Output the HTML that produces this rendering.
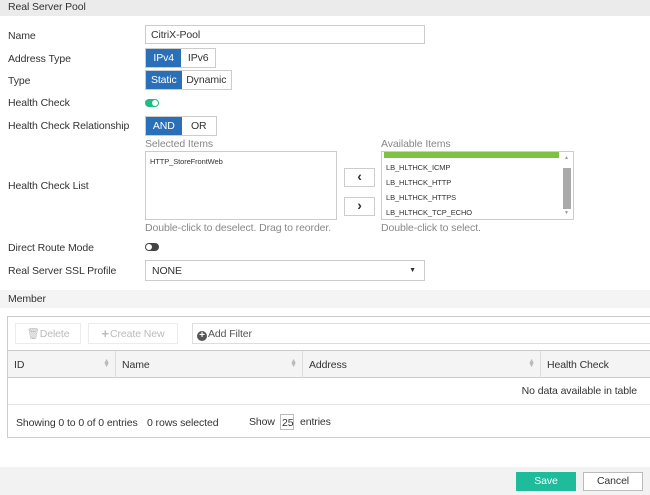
<!DOCTYPE html>
<html><head><style>
*{box-sizing:border-box;margin:0;padding:0}
body{width:650px;height:495px;background:#fff;font-family:"Liberation Sans",Arial,sans-serif;font-size:10.5px;color:#333;position:relative;overflow:hidden;letter-spacing:-0.1px}
.a{position:absolute}
.lbl{position:absolute;left:8px;font-size:10.5px;color:#333}
.bg{position:absolute;display:flex;border:1px solid #ccc;height:20px;background:#fff}
.bg div{display:flex;align-items:center;justify-content:center;font-size:10.5px;color:#333}
.bg .on{background:#2a70b8;color:#fff}
.box{position:absolute;border:1px solid #ccc;background:#fff}
.tog{position:absolute;width:14px;height:8px;border-radius:4px}
.tog i{position:absolute;top:1px;width:6px;height:6px;border-radius:3px;background:#fff}
.hint{position:absolute;color:#888;font-size:10.5px}
.it{position:absolute;left:4px;font-size:7.5px;color:#333}
.tb{position:absolute;border:1px solid #ececec;height:21px;color:#bbb;font-size:10.5px;display:flex;align-items:center;justify-content:center}
.th{position:absolute;top:351px;height:27px;border-right:1px solid #ddd;display:flex;align-items:center;padding-left:6px;font-size:10.5px;color:#333}
.srt{position:absolute;right:5px;top:9px;color:#bbb;font-size:7px;line-height:4px}
</style></head><body>
<div class="a" style="left:0;top:0;width:650px;height:16px;background:#ebebeb"></div>
<div class="a" style="left:8px;top:1px">Real Server Pool</div>

<div class="lbl" style="top:30px">Name</div>
<div class="box" style="left:145px;top:25px;width:280px;height:19px;padding:3px 0 0 5px">CitriX-Pool</div>

<div class="lbl" style="top:53px">Address Type</div>
<div class="bg" style="left:145px;top:48px;width:71px"><div class="on" style="width:36px">IPv4</div><div style="width:34px">IPv6</div></div>

<div class="lbl" style="top:75px">Type</div>
<div class="bg" style="left:145px;top:70px;width:87px"><div class="on" style="width:36px">Static</div><div style="width:50px">Dynamic</div></div>

<div class="lbl" style="top:97px">Health Check</div>
<div class="tog" style="left:145px;top:99px;background:#1fbc84"><i style="left:7px"></i></div>

<div class="lbl" style="top:120px">Health Check Relationship</div>
<div class="bg" style="left:145px;top:116px;width:72px"><div class="on" style="width:36px">AND</div><div style="width:35px">OR</div></div>

<div class="hint" style="left:145px;top:138px">Selected Items</div>
<div class="box" style="left:145px;top:151px;width:192px;height:69px"><div class="it" style="top:5px">HTTP_StoreFrontWeb</div></div>
<div class="lbl" style="top:180px">Health Check List</div>

<div class="box" style="left:344px;top:168px;width:31px;height:19px;text-align:center;font-weight:bold;font-size:14px;line-height:15px">&#8249;</div>
<div class="box" style="left:344px;top:197px;width:31px;height:19px;text-align:center;font-weight:bold;font-size:14px;line-height:15px">&#8250;</div>

<div class="hint" style="left:381px;top:138px">Available Items</div>
<div class="box" style="left:381px;top:151px;width:193px;height:69px;overflow:hidden">
<div class="a" style="left:2px;top:0;width:175px;height:6px;background:#7dc242"></div>
<div class="it" style="top:11px">LB_HLTHCK_ICMP</div>
<div class="it" style="top:26px">LB_HLTHCK_HTTP</div>
<div class="it" style="top:41px">LB_HLTHCK_HTTPS</div>
<div class="it" style="top:56px">LB_HLTHCK_TCP_ECHO</div>
<div class="a" style="left:181px;top:16px;width:8px;height:41px;background:#aaa"></div>
<div class="a" style="left:182px;top:3px;font-size:5px;color:#999">&#9650;</div>
<div class="a" style="left:182px;top:58px;font-size:5px;color:#999">&#9660;</div>
</div>
<div class="hint" style="left:145px;top:222px">Double-click to deselect. Drag to reorder.</div>
<div class="hint" style="left:381px;top:222px">Double-click to select.</div>

<div class="lbl" style="top:242px">Direct Route Mode</div>
<div class="tog" style="left:145px;top:243px;background:#444"><i style="left:1px"></i></div>

<div class="lbl" style="top:265px">Real Server SSL Profile</div>
<div class="box" style="left:145px;top:260px;width:280px;height:21px;padding:4px 0 0 6px">NONE<span class="a" style="right:8px;top:6px;font-size:7px">&#9660;</span></div>

<div class="a" style="left:0;top:290px;width:650px;height:18px;background:#f4f4f4"></div>
<div class="a" style="left:8px;top:293px">Member</div>

<div class="a" style="left:7px;top:316px;width:650px;height:122px;border:1px solid #ccc"></div>
<div class="tb" style="left:15px;top:323px;width:66px">&#128465;Delete</div>
<div class="tb" style="left:88px;top:323px;width:90px"><b style="font-size:13px;margin-right:1px">+</b>Create New</div>
<div class="a" style="left:192px;top:323px;width:460px;height:21px;border:1px solid #ddd;padding:4px 0 0 4px;color:#555"><span style="display:inline-block;width:10px;height:10px;border-radius:5px;background:#555;color:#fff;font-size:10px;line-height:10px;text-align:center;font-weight:bold;vertical-align:-1px;margin-right:1px">+</span>Add Filter</div>

<div class="a" style="left:8px;top:350px;width:642px;height:28px;background:#f4f4f4;border-top:1px solid #ccc;border-bottom:1px solid #ccc"></div>
<div class="th" style="left:8px;width:108px">ID<span class="srt">&#9650;<br>&#9660;</span></div>
<div class="th" style="left:116px;width:187px">Name<span class="srt">&#9650;<br>&#9660;</span></div>
<div class="th" style="left:303px;width:238px">Address<span class="srt">&#9650;<br>&#9660;</span></div>
<div class="th" style="left:541px;width:110px;border:none">Health Check</div>
<div class="a" style="left:500px;width:137px;text-align:right;top:385px">No data available in table</div>
<div class="a" style="left:8px;top:404px;width:642px;border-top:1px solid #e6e6e6"></div>
<div class="a" style="left:16px;top:417px">Showing 0 to 0 of 0 entries</div>
<div class="a" style="left:147px;top:417px">0 rows selected</div>
<div class="a" style="left:249px;top:416px">Show</div>
<div class="a" style="left:280px;top:414px;width:14px;height:16px;border:1px solid #bbb;padding:2px 0 0 1px">25</div>
<div class="a" style="left:300px;top:416px">entries</div>

<div class="a" style="left:0;top:467px;width:650px;height:28px;background:#f2f2f2"></div>
<div class="a" style="left:516px;top:472px;width:60px;height:19px;background:#1fbc9c;color:#fff;text-align:center;line-height:19px">Save</div>
<div class="a" style="left:583px;top:472px;width:60px;height:19px;background:#fff;border:1px solid #bbb;text-align:center;line-height:17px">Cancel</div>
</body></html>
